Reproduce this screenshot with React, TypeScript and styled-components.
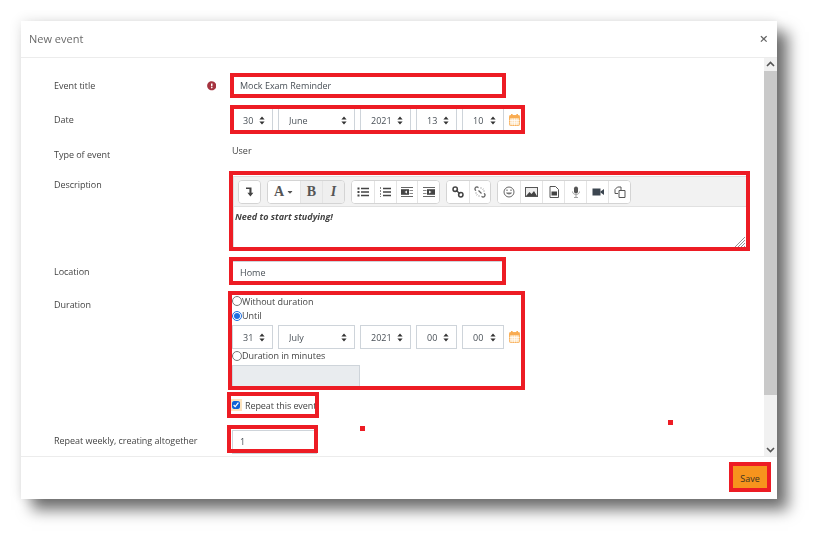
import React from "react";
import styled, { createGlobalStyle } from "styled-components";
import { FaExclamationCircle, FaCaretDown } from "react-icons/fa";

const caret = encodeURIComponent(
  `<svg xmlns="http://www.w3.org/2000/svg" width="6" height="9" viewBox="0 0 6 9"><path fill="#333" d="M3 .5 5.6 3.6H.4zM3 8.5.4 5.4h5.2z"/></svg>`
);

const Global = createGlobalStyle`
  html, body { margin: 0; padding: 0; background: #fff; }
  body { font-family: "Open Sans", "Liberation Sans", sans-serif; color: #495057; }
  #root { width: 819px; height: 541px; overflow: hidden; filter: blur(0.3px); }
`;

const Page = styled.div`
  display: flex;
  width: 819px;
  height: 541px;
  padding: 21px 42px 42px 21px;
  box-sizing: border-box;
`;
const Modal = styled.div`
  position: relative;
  display: flex;
  flex-direction: column;
  width: 756px;
  height: 478px;
  background: #fff;
  box-shadow: 11px 11px 14px rgba(0, 0, 0, 0.55), 0 0 12px rgba(0, 0, 0, 0.12);
`;
const Header = styled.header`
  display: flex;
  align-items: center;
  justify-content: space-between;
  height: 37px;
  padding: 0 9px 2px 8px;
  box-sizing: border-box;
  border-bottom: 1px solid #ececec;
`;
const Title = styled.h5`
  margin: 0;
  font-size: 11px;
  font-weight: 400;
  color: #6a6a6a;
`;
const Close = styled.span`
  font-size: 15px;
  font-weight: 600;
  line-height: 1;
  color: #666;
`;
const Body = styled.div`
  display: flex;
  flex: 1;
  min-height: 0;
`;
const Form = styled.form`
  flex: 1;
  padding: 16px 0 0 33px;
  overflow: hidden;
`;
const Row = styled.div<{ $gap?: number }>`
  display: grid;
  grid-template-columns: 178px 1fr;
  margin-top: ${(p) => p.$gap ?? 0}px;
`;
const Label = styled.label<{ $top?: number }>`
  display: flex;
  justify-content: space-between;
  padding: ${(p) => p.$top ?? 5}px 16px 0 0;
  font-size: 9px;
  line-height: 14px;
  letter-spacing: -0.03px;
  color: #444;
`;
const Required = styled.span`
  display: flex;
  padding-top: 2px;
  font-size: 9.5px;
  color: #a5333f;
`;
const TextInput = styled.input<{ $w?: number }>`
  display: block;
  width: ${(p) => p.$w ?? 273}px;
  height: 24px;
  box-sizing: border-box;
  padding: 0 7px 2px;
  border: 1px solid #ced4da;
  font: 9px "Open Sans", sans-serif;
  color: #495057;
  background: #fff;
  &:disabled { background: #e9ecef; }
`;
const DateRow = styled.div`
  display: flex;
  align-items: center;
  gap: 5px;
`;
const Select = styled.select<{ $w: number }>`
  appearance: none;
  width: ${(p) => p.$w}px;
  height: 24px;
  box-sizing: border-box;
  padding: 0 0 0 10px;
  border: 1px solid #ced4da;
  border-radius: 0;
  font: 9px "Open Sans", sans-serif;
  color: #495057;
  background: #fff url("data:image/svg+xml,${caret}") no-repeat right 7px center;
`;
const StaticText = styled.div`
  padding-top: 2px;
  height: 22px;
  font-size: 9px;
  line-height: 14px;
  color: #444;
`;
const Editor = styled.div`
  position: relative;
  width: 514px;
  margin-left: 1px;
  border: 1px solid #dedede;
  box-sizing: border-box;
`;
const Toolbar = styled.div`
  display: flex;
  gap: 6px;
  height: 30px;
  padding: 3px 0 0 4px;
  box-sizing: border-box;
  background: #f2f2f2;
  border-bottom: 1px solid #e1e1e1;
`;
const Group = styled.div`
  display: flex;
  height: 22px;
  background: #fff;
  border: 1px solid #d4d4d4;
  border-radius: 4px;
  overflow: hidden;
`;
const Tool = styled.button<{ $w?: number; $active?: boolean }>`
  display: flex;
  align-items: center;
  justify-content: center;
  gap: 2px;
  width: ${(p) => p.$w ?? 22}px;
  padding: 0;
  border: 0;
  border-left: 1px solid #e4e4e4;
  &:first-child { border-left: 0; }
  background: ${(p) => (p.$active ? "#efefef" : "#fff")};
  color: #555;
  font: 700 14px "Liberation Serif", serif;
  svg { display: block; }
`;
const Italic = styled.span`
  font-style: italic;
`;
const Content = styled.div`
  height: 42px;
  padding: 3px 1px;
  box-sizing: border-box;
  font-size: 9px;
  line-height: 14px;
  font-weight: 700;
  font-style: italic;
  color: #444;
`;
const Grip = styled.svg`
  position: absolute;
  right: 1px;
  bottom: 1px;
`;
const Duration = styled.div`
  display: flex;
  flex-direction: column;
  align-items: flex-start;
`;
const Choice = styled.label`
  display: flex;
  align-items: center;
  height: 15px;
  margin-top: -1px;
  font-size: 9px;
  letter-spacing: -0.03px;
  color: #444;
  input { margin: 0; width: 10px; height: 10px; accent-color: #1f6fe0; }
  &:first-child { margin-top: -2px; height: 16px; }
`;
const Spacer = styled.div<{ $h: number }>`
  height: ${(p) => p.$h}px;
`;
const RepeatBox = styled.label`
  display: flex;
  align-items: center;
  gap: 5px;
  height: 20px;
  margin-top: -2px;
  font-size: 9px;
  letter-spacing: -0.08px;
  color: #444;
  input { margin: 0; width: 8px; height: 8px; accent-color: #0f62d6; outline: 2px solid #fde3bd; }
`;
const Scrollbar = styled.div`
  display: flex;
  flex-direction: column;
  width: 13px;
  background: #f1f1f1;
`;
const Arrow = styled.svg`
  display: block;
  flex: none;
  height: 13px;
  width: 13px;
`;
const Thumb = styled.div`
  height: 324px;
  background: #c9c9c9;
`;
const Track = styled.div`
  flex: 1;
`;
const Footer = styled.footer`
  display: flex;
  justify-content: flex-end;
  align-items: center;
  height: 43px;
  padding: 0 8px 2px 0;
  box-sizing: border-box;
  border-top: 1px solid #ececec;
`;
const Save = styled.button`
  width: 38px;
  height: 26px;
  padding: 2px 0 0;
  border: 0;
  background: #f7941d;
  font: 9px "Open Sans", sans-serif;
  color: #3b3320;
`;
const Mark = styled.div<{ $x: number; $y: number; $w: number; $h: number }>`
  position: absolute;
  left: ${(p) => p.$x - 21}px;
  top: ${(p) => p.$y - 21}px;
  width: ${(p) => p.$w}px;
  height: ${(p) => p.$h}px;
  box-sizing: border-box;
  border: 4px solid #ed1c24;
  pointer-events: none;
`;
const Dot = styled(Mark)`
  border: 0;
  background: #ed1c24;
`;

const Ico = ({ children, w = 12, h = 12 }: { children: React.ReactNode; w?: number; h?: number }) => (
  <svg width={w} height={h} viewBox={`0 0 ${w} ${h}`} fill="none" stroke="#444">
    {children}
  </svg>
);

const Collapse = () => (
  <svg width="9" height="10" viewBox="0 0 9 10" fill="#444">
    <path d="M1 0.5h5.5v5.2H8.4L5.4 9.6 2.4 5.7h2V2H1z" />
  </svg>
);
const Calendar = () => (
  <svg width="11" height="12" viewBox="0 0 11 12">
    <rect x="0.5" y="1.5" width="10" height="10" rx="1" fill="#fde2bd" stroke="#f9b25e" />
    <rect x="0.5" y="1.5" width="10" height="2.8" fill="#f9ac52" />
    <rect x="2" y="0" width="1.6" height="2.5" fill="#f9ac52" />
    <rect x="7.4" y="0" width="1.6" height="2.5" fill="#f9ac52" />
    <path d="M0.5 6.5h10M0.5 8.8h10M3.2 4.5v7M5.5 4.5v7M7.8 4.5v7" stroke="#fff" strokeWidth="0.7" />
  </svg>
);
const ListUl = () => (
  <Ico>
    <path d="M4 2.5h8M4 6h8M4 9.5h8" strokeWidth="1.6" />
    <path d="M0.5 2.5h2M0.5 6h2M0.5 9.5h2" strokeWidth="1.8" />
  </Ico>
);
const ListOl = () => (
  <Ico>
    <path d="M4 2.5h8M4 6h8M4 9.5h8" strokeWidth="1.4" />
    <path d="M1.5 1v10" strokeWidth="1" stroke="#888" strokeDasharray="2 1" />
  </Ico>
);
const Outdent = () => (
  <Ico>
    <path d="M0 1.5h12M0 10.5h12" strokeWidth="1" stroke="#666" />
    <rect x="0" y="3.2" width="8" height="5.6" fill="#444" stroke="none" />
    <path d="M8.5 4.5h3.5M8.5 7.5h3.5" strokeWidth="1" stroke="#888" />
    <path d="M6 4.5 3.5 6 6 7.5z" fill="#eee" stroke="none" />
  </Ico>
);
const Indent = () => (
  <Ico>
    <path d="M0 1.5h12M0 10.5h12" strokeWidth="1" stroke="#666" />
    <rect x="4" y="3.2" width="8" height="5.6" fill="#444" stroke="none" />
    <path d="M0 4.5h3.5M0 7.5h3.5" strokeWidth="1" stroke="#888" />
    <path d="M6 4.5 8.5 6 6 7.5z" fill="#eee" stroke="none" />
  </Ico>
);
const Link = () => (
  <Ico>
    <circle cx="3.2" cy="3.2" r="2.2" strokeWidth="1.5" />
    <circle cx="8.8" cy="8.8" r="2.2" strokeWidth="1.5" />
    <path d="M4 4l4 4" strokeWidth="1.5" />
  </Ico>
);
const Unlink = () => (
  <Ico>
    <path d="M4.5 1.6 3.4 1A2 2 0 0 0 1 3.4l.8 1.4" strokeWidth="1.3" stroke="#666" />
    <path d="M7.5 10.4l1.1.6A2 2 0 0 0 11 8.6l-.8-1.4" strokeWidth="1.3" stroke="#666" />
    <path d="M4.5 4.5l3 3" strokeWidth="1.2" stroke="#666" />
    <path d="M7 1v2M9.5 2.5 8.5 4M11 5H9M1 7h2M2.5 9.5 3.5 8M5 11V9" strokeWidth="0.8" stroke="#aaa" />
  </Ico>
);
const Smile = () => (
  <Ico>
    <circle cx="6" cy="6" r="5" strokeWidth="1" stroke="#666" />
    <path d="M3 6.6c.6 2.6 5.4 2.6 6 0z" fill="#777" stroke="none" />
    <path d="M4 3.6v1.4M8 3.6v1.4" strokeWidth="1.1" stroke="#666" />
  </Ico>
);
const ImageIco = () => (
  <Ico w={13}>
    <rect x="0.5" y="1.5" width="12" height="9" strokeWidth="1" stroke="#555" fill="#eee" />
    <path d="M1 10l3.5-4 2 2 2.5-3 3 5z" fill="#444" stroke="none" />
  </Ico>
);
const FileIco = () => (
  <Ico>
    <path d="M2 .5h5.5L10.5 3.5v8H2z" strokeWidth="1" stroke="#555" fill="#fff" />
    <rect x="3.5" y="5.5" width="5.5" height="4" fill="#444" stroke="none" />
  </Ico>
);
const Mic = () => (
  <Ico>
    <rect x="4" y="0.5" width="4" height="7" rx="2" fill="#555" stroke="none" />
    <path d="M2.5 5.5c0 4 7 4 7 0M6 9v2.5M4 11.5h4" strokeWidth="0.9" stroke="#999" />
  </Ico>
);
const Video = () => (
  <Ico>
    <rect x="0.5" y="2.5" width="8" height="7" fill="#3c4650" stroke="none" />
    <path d="M8.5 5.5 12 3v6L8.5 6.5z" fill="#3c4650" stroke="none" />
  </Ico>
);
const Copy = () => (
  <Ico>
    <path d="M1 7.5V3.5L3.5 1H7v3" strokeWidth="1" stroke="#555" />
    <path d="M5 4.5h6v7H5zM1 7.5h3" strokeWidth="1" stroke="#555" fill="#fff" />
  </Ico>
);

const DateFields = ({ v }: { v: string[] }) => {
  const widths = [41, 77, 51, 41, 42];
  return (
    <DateRow>
      {v.map((val, i) => (
        <Select key={i} $w={widths[i]} defaultValue={val}>
          <option>{val}</option>
        </Select>
      ))}
      <Calendar />
    </DateRow>
  );
};

export default function App() {
  return (
    <Page>
      <Global />
      <Modal>
        <Header>
          <Title>New event</Title>
          <Close>×</Close>
        </Header>
        <Body>
          <Form>
            <Row>
              <Label>
                Event title
                <Required><FaExclamationCircle /></Required>
              </Label>
              <TextInput defaultValue="Mock Exam Reminder" />
            </Row>
            <Row $gap={10}>
              <Label>Date</Label>
              <DateFields v={["30", "June", "2021", "13", "10"]} />
            </Row>
            <Row $gap={10}>
              <Label $top={6}>Type of event</Label>
              <StaticText>User</StaticText>
            </Row>
            <Row $gap={10}>
              <Label $top={2}>Description</Label>
              <Editor>
                <Toolbar>
                  <Group><Tool $w={21}><Collapse /></Tool></Group>
                  <Group>
                    <Tool $w={32}>A<FaCaretDown size={8} /></Tool>
                    <Tool $active>B</Tool>
                    <Tool $active><Italic>I</Italic></Tool>
                  </Group>
                  <Group>
                    <Tool $w={21.75}><ListUl /></Tool>
                    <Tool $w={21.75}><ListOl /></Tool>
                    <Tool $w={21.75}><Outdent /></Tool>
                    <Tool $w={21.75}><Indent /></Tool>
                  </Group>
                  <Group>
                    <Tool $w={21.5}><Link /></Tool>
                    <Tool $w={21.5}><Unlink /></Tool>
                  </Group>
                  <Group>
                    <Tool><Smile /></Tool>
                    <Tool><ImageIco /></Tool>
                    <Tool><FileIco /></Tool>
                    <Tool><Mic /></Tool>
                    <Tool><Video /></Tool>
                    <Tool><Copy /></Tool>
                  </Group>
                </Toolbar>
                <Content>Need to start studying!</Content>
                <Grip width="12" height="12" viewBox="0 0 12 12" stroke="#777" strokeWidth="0.8">
                  <path d="M1 12 12 1M4 12l8-8M7 12l5-5M10 12l2-2" />
                </Grip>
              </Editor>
            </Row>
            <Row $gap={11}>
              <Label $top={4}>Location</Label>
              <TextInput defaultValue="Home" />
            </Row>
            <Row $gap={10}>
              <Label $top={3}>Duration</Label>
              <Duration>
                <Choice><input type="radio" name="d" />Without duration</Choice>
                <Choice><input type="radio" name="d" defaultChecked />Until</Choice>
                <Spacer $h={2} />
                <DateFields v={["31", "July", "2021", "00", "00"]} />
                <Choice><input type="radio" name="d" />Duration in minutes</Choice>
                <Spacer $h={2} />
                <TextInput $w={128} disabled />
              </Duration>
            </Row>
            <Row $gap={8}>
              <span />
              <RepeatBox><input type="checkbox" defaultChecked />Repeat this event</RepeatBox>
            </Row>
            <Row $gap={15}>
              <Label $top={4}>Repeat weekly, creating altogether</Label>
              <TextInput $w={85} defaultValue="1" />
            </Row>
          </Form>
          <Scrollbar>
            <Arrow viewBox="0 0 13 13" fill="none" stroke="#555" strokeWidth="1.6"><path d="M3 8l3.5-3.5L10 8" /></Arrow>
            <Thumb />
            <Track />
            <Arrow viewBox="0 0 13 13" fill="none" stroke="#555" strokeWidth="1.6"><path d="M3 5l3.5 3.5L10 5" /></Arrow>
          </Scrollbar>
        </Body>
        <Footer><Save type="button">Save</Save></Footer>
        <Mark $x={230} $y={73} $w={276} $h={25} />
        <Mark $x={230} $y={105} $w={295} $h={29} />
        <Mark $x={229} $y={171} $w={521} $h={80} />
        <Mark $x={229} $y={257} $w={277} $h={28} />
        <Mark $x={228} $y={291} $w={297} $h={99} />
        <Mark $x={227} $y={392} $w={92} $h={26} />
        <Mark $x={227} $y={425} $w={91} $h={28} />
        <Mark $x={729} $y={462} $w={42} $h={30} />
        <Dot $x={360} $y={426} $w={5} $h={5} />
        <Dot $x={668} $y={420} $w={5} $h={5} />
      </Modal>
    </Page>
  );
}
